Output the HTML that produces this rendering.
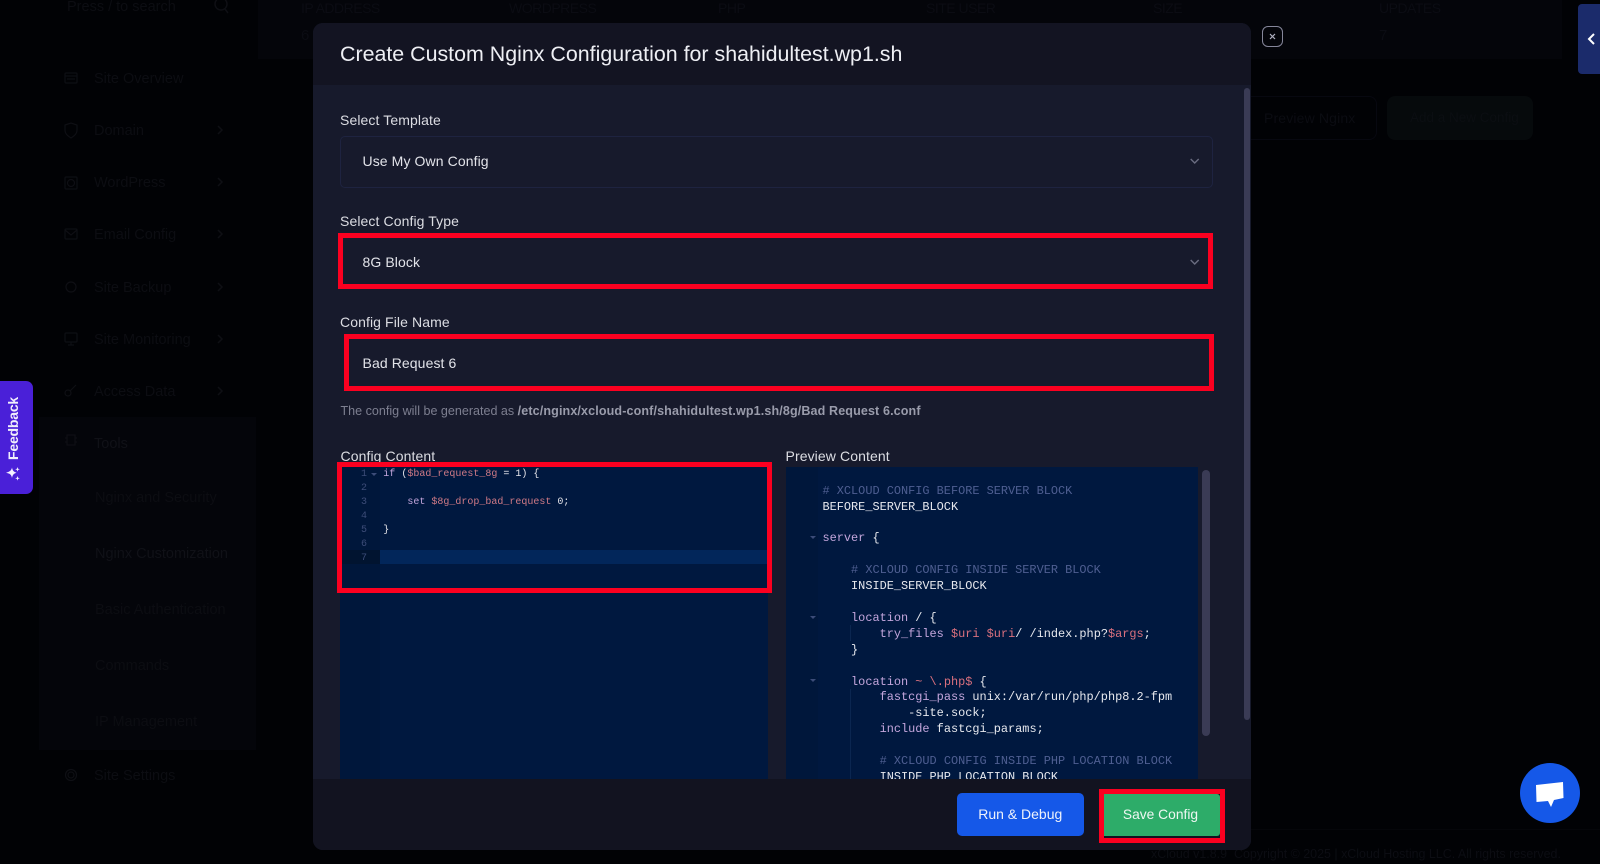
<!DOCTYPE html>
<html lang="en">
<head>
<meta charset="utf-8">
<title>Create Custom Nginx Configuration</title>
<style>
html,body{margin:0;padding:0;width:1600px;height:862px;overflow:hidden;background:#010205;font-family:"Liberation Sans",sans-serif}
.a{position:absolute}
.t{position:absolute;white-space:nowrap;line-height:20px;height:20px}
.dim{color:#0c0d12;font-size:14.5px}
.hd{color:#0b0c13;font-size:14px;letter-spacing:-.5px}
.sub{color:#0c0d12;font-size:14.5px}
.lab{color:#dcdde3;font-size:14px;letter-spacing:.1px}
.val{color:#e2e3e9;font-size:14px;letter-spacing:.1px}
.red{position:absolute;border:5px solid #fb0020;box-sizing:border-box}
.m{position:absolute;font-family:"Liberation Mono",monospace;white-space:pre}
.l1{font-size:10px;line-height:14px;color:#e4e4ea}
.l2{font-size:11.9px;line-height:15.9px;color:#e6e8ee}
.c{color:#4f5f92}.k{color:#c3a6dc}.v{color:#d9707e}.r{color:#cf7a86}
.n{position:absolute;left:340px;width:27px;text-align:right;font:10px/14px "Liberation Mono",monospace;color:#3c4c78}
.g{position:absolute;width:1px;background:#0b2650}
svg{position:absolute;overflow:visible}
</style>
</head>
<body>

<!-- dimmed background: sidebar -->
<div class="t dim" style="left:67px;top:-3px">Press / to search</div>
<svg style="left:213px;top:0" width="17" height="14" fill="none" stroke="#0e0f14" stroke-width="1.5"><circle cx="8" cy="4" r="6"/><path d="M12 9l3 4"/></svg>

<div class="a" style="left:39px;top:417px;width:217px;height:333px;background:#04050a"></div>

<div class="t dim" style="left:94px;top:69px">Site Overview</div>
<div class="t dim" style="left:94px;top:121px">Domain</div>
<div class="t dim" style="left:94px;top:173px">WordPress</div>
<div class="t dim" style="left:94px;top:225px">Email Config</div>
<div class="t dim" style="left:94px;top:278px">Site Backup</div>
<div class="t dim" style="left:94px;top:330px">Site Monitoring</div>
<div class="t dim" style="left:94px;top:382px">Access Data</div>
<div class="t dim" style="left:94px;top:434px;color:#101117">Tools</div>
<div class="t sub" style="left:95px;top:488px">Nginx and Security</div>
<div class="t sub" style="left:95px;top:544px;color:#101117">Nginx Customization</div>
<div class="t sub" style="left:95px;top:600px">Basic Authentication</div>
<div class="t sub" style="left:95px;top:656px">Commands</div>
<div class="t sub" style="left:95px;top:712px">IP Management</div>
<div class="t dim" style="left:94px;top:766px">Site Settings</div>

<svg style="left:64px;top:70px" width="14" height="720" fill="none" stroke="#0e0f14" stroke-width="1.2">
  <rect x="1" y="3" width="12" height="10" rx="1"/><path d="M1 6h12M3 9h8"/>
  <path d="M1 55l6-2 6 2v5c0 4-3 6-6 8-3-2-6-4-6-8z"/>
  <rect x="1" y="107" width="12" height="12" rx="1"/><circle cx="7" cy="113" r="3.5"/>
  <rect x="1" y="159" width="12" height="10" rx="1"/><path d="M1 160l6 5 6-5"/>
  <circle cx="7" cy="217" r="5"/>
  <rect x="1" y="263" width="12" height="9" rx="1"/><path d="M7 272v3M4 275h6"/>
  <circle cx="4" cy="323" r="3"/><path d="M6 321l6-6"/>
  <path d="M3 365h8v10H3zM1 368h2M11 368h2M1 372h2M11 372h2"/>
  <circle cx="7" cy="705" r="3"/><circle cx="7" cy="705" r="5.5"/>
</svg>
<svg style="left:217px;top:71px" width="8" height="330" fill="none" stroke="#0e0f14" stroke-width="1.5">
  <path d="M1 55l4 4-4 4M1 107l4 4-4 4M1 159l4 4-4 4M1 212l4 4-4 4M1 264l4 4-4 4M1 316l4 4-4 4"/>
</svg>

<!-- dimmed background: table -->
<div class="a" style="left:258px;top:-10px;width:1304px;height:69px;background:#04050a"></div>
<div class="t hd" style="left:301px;top:-2px">IP ADDRESS</div>
<div class="t hd" style="left:509px;top:-2px">WORDPRESS</div>
<div class="t hd" style="left:718px;top:-2px">PHP</div>
<div class="t hd" style="left:926px;top:-2px">SITE USER</div>
<div class="t hd" style="left:1153px;top:-2px">SIZE</div>
<div class="t hd" style="left:1379px;top:-2px">UPDATES</div>
<div class="t hd" style="left:301px;top:26px;font-size:15px">6</div>
<div class="t hd" style="left:1379px;top:26px;font-size:15px">7</div>

<div class="a" style="left:1240px;top:96px;width:137px;height:44px;box-sizing:border-box;border:1px solid #070810;border-radius:8px"></div>
<div class="t" style="left:1264px;top:108px;color:#0b0c12;font-size:14px;letter-spacing:.15px">Preview Nginx</div>
<div class="a" style="left:1387px;top:96px;width:146px;height:44px;background:#060a0c;border-radius:8px"></div>
<div class="t" style="left:1410px;top:108px;color:#0b0e12;font-size:13.5px">Add a New Config</div>

<div class="a" style="left:1578px;top:4px;width:22px;height:70px;background:#1b2b6b;border-radius:4px 0 0 4px"></div>
<svg style="left:1587px;top:32px" width="9" height="14" fill="none" stroke="#fff" stroke-width="2"><path d="M7 2L2 7l5 5"/></svg>

<div class="t" style="left:1151px;top:844px;color:#0c0d13;font-size:12.45px">xCloud v1.8.9&nbsp; Copyright © 2025 | xCloud Hosting LLC. All rights reserved.</div>
<div class="a" style="left:1251px;top:829px;width:349px;height:1px;background:#05060a"></div>

<!-- feedback tab -->
<div class="a" style="left:0;top:381px;width:33px;height:113px;background:#4a20d8;border-radius:0 7px 7px 0"></div>
<div class="t" style="left:-18px;top:419px;width:62px;color:#f0eefc;font-size:14px;font-weight:bold;transform:rotate(-90deg);text-align:center;letter-spacing:-.2px">Feedback</div>
<svg style="left:5px;top:466px" width="16" height="16" fill="#f4f2ff">
  <path d="M7 1.5c.6 3.2 1.7 4.4 4.6 5.2C8.7 7.5 7.600 8.800 7 12 6.400 8.800 5.300 7.500 1 6.700 4.300 5.900 6.400 4.700 7 1.500z"/>
  <path d="M12.5 1l.6 1.700 1.700.6-1.700.6-.6 1.700-.6-1.700-1.700-.6 1.700-.6zM12.500 10l.6 1.700 1.700.6-1.700.6-.6 1.700-.6-1.700-1.700-.6 1.700-.6z"/>
</svg>

<!-- chat bubble -->
<div class="a" style="left:1520px;top:763px;width:60px;height:60px;border-radius:50%;background:#1558e8"></div>
<svg style="left:1535px;top:781px" width="30" height="26" fill="#fff"><path d="M1 4L28 1l.5 16-9.5 2-3 7-3-6-11.5 1z"/></svg>

<!-- close button -->
<div class="a" style="left:1262px;top:26px;width:21px;height:21px;box-sizing:border-box;border:1.5px solid #85869a;border-radius:6px"></div>
<svg style="left:1269px;top:33px" width="7" height="7" fill="none" stroke="#b0b1c2" stroke-width="1.2"><path d="M1 1l5 5M6 1L1 6"/></svg>

<!-- modal -->
<div class="a" style="left:313px;top:23px;width:938px;height:827px;background:#171a2c;border-radius:10px;overflow:hidden">
  <div class="a" style="left:0;top:0;width:938px;height:62px;background:#131422"></div>
  <div class="a" style="left:0;top:756px;width:938px;height:71px;background:#121320"></div>
  <div class="a" style="left:931px;top:65px;width:6px;height:632px;background:#3a3b55;border-radius:3px"></div>
</div>

<div class="t" style="left:340px;top:41px;height:26px;line-height:26px;color:#eeeff4;font-size:21.4px">Create Custom Nginx Configuration for shahidultest.wp1.sh</div>

<div class="t lab" style="left:340px;top:110px">Select Template</div>
<div class="a" style="left:340px;top:136px;width:873px;height:52px;box-sizing:border-box;border:1px solid #1e2340;border-radius:5px"></div>
<div class="t val" style="left:362.5px;top:151px">Use My Own Config</div>
<svg style="left:1190px;top:158px" width="10" height="7" fill="none" stroke="#6a6c80" stroke-width="1.4"><path d="M.7 1l4 4 4-4"/></svg>

<div class="t lab" style="left:340px;top:211px">Select Config Type</div>
<div class="red" style="left:338px;top:233px;width:875px;height:56px"></div>
<div class="t val" style="left:362.5px;top:252px">8G Block</div>
<svg style="left:1190px;top:259px" width="10" height="7" fill="none" stroke="#6a6c80" stroke-width="1.4"><path d="M.7 1l4 4 4-4"/></svg>

<div class="t lab" style="left:340px;top:312px">Config File Name</div>
<div class="red" style="left:344px;top:334px;width:870px;height:57px"></div>
<div class="t val" style="left:362.5px;top:353px">Bad Request 6</div>

<div class="t" style="left:340.5px;top:401px;color:#7d7f90;font-size:12.55px">The config will be generated as <b style="color:#9a9cab;letter-spacing:.12px">/etc/nginx/xcloud-conf/shahidultest.wp1.sh/8g/Bad Request 6.conf</b></div>

<div class="t lab" style="left:340.5px;top:446px">Config Content</div>
<div class="t lab" style="left:785.5px;top:446px">Preview Content</div>

<!-- left editor -->
<div class="a" style="left:340px;top:467px;width:428px;height:312px;background:#00183f"></div>
<div class="a" style="left:340px;top:467px;width:40px;height:312px;background:#00173b"></div>
<div class="a" style="left:380px;top:550px;width:388px;height:14px;background:#02265a"></div>
<div class="a" style="left:340px;top:550px;width:40px;height:14px;background:#011430"></div>
<div class="n" style="top:468px">1</div>
<div class="n" style="top:482px">2</div>
<div class="n" style="top:496px">3</div>
<div class="n" style="top:510px">4</div>
<div class="n" style="top:524px">5</div>
<div class="n" style="top:538px">6</div>
<div class="n" style="top:552px">7</div>
<svg style="left:371px;top:473px" width="6" height="4" fill="#3c4c78"><path d="M0 0h6L3 3z"/></svg>
<div class="m l1" style="left:383.3px;top:468px"><span class="k">if</span> (<span class="r">$bad_request_8g</span> = 1) {

    <span class="k">set</span> <span class="r">$8g_drop_bad_request</span> 0;

}</div>
<div class="red" style="left:337px;top:462px;width:435px;height:131px"></div>

<!-- right editor -->
<div class="a" style="left:786px;top:467px;width:412px;height:312px;background:#00183f;overflow:hidden">
  <div class="a" style="left:0;top:0;width:32px;height:312px;background:#00173b"></div>
  <div class="g" style="left:64px;top:158px;height:16px"></div>
  <div class="g" style="left:64px;top:222px;height:64px"></div>
  <div class="g" style="left:64px;top:286px;height:26px"></div>
  <div class="m l2" style="left:36.5px;top:16.7px"><span class="c"># XCLOUD CONFIG BEFORE SERVER BLOCK</span>
BEFORE_SERVER_BLOCK

<span class="k">server</span> {

    <span class="c"># XCLOUD CONFIG INSIDE SERVER BLOCK</span>
    INSIDE_SERVER_BLOCK

    <span class="k">location</span> / {
        <span class="k">try_files</span> <span class="v">$uri</span> <span class="v">$uri</span>/ /index.php?<span class="v">$args</span>;
    }

    <span class="k">location</span> <span class="v">~ \.php$</span> {
        <span class="k">fastcgi_pass</span> unix:/var/run/php/php8.2-fpm
            -site.sock;
        <span class="k">include</span> fastcgi_params;

        <span class="c"># XCLOUD CONFIG INSIDE PHP LOCATION BLOCK</span>
        INSIDE_PHP_LOCATION_BLOCK</div>
  <svg style="left:24px;top:69px" width="6" height="4" fill="#3c4c78"><path d="M0 0h6L3 3z"/></svg>
  <svg style="left:24px;top:149px" width="6" height="4" fill="#3c4c78"><path d="M0 0h6L3 3z"/></svg>
  <svg style="left:24px;top:212px" width="6" height="4" fill="#3c4c78"><path d="M0 0h6L3 3z"/></svg>
</div>
<div class="a" style="left:1202px;top:470px;width:8px;height:266px;background:#3a3b55;border-radius:4px"></div>

<!-- footer buttons -->
<div class="a" style="left:956.5px;top:793px;width:127.5px;height:43px;background:#1558e8;border-radius:5px"></div>
<div class="t" style="left:956.5px;top:804px;width:127.5px;text-align:center;color:#eef2fb;font-size:14px">Run &amp; Debug</div>
<div class="a" style="left:1099px;top:789px;width:126px;height:54px;background:#121320;box-sizing:border-box;border:5px solid #fb0020"></div>
<div class="a" style="left:1104px;top:794px;width:116px;height:42px;background:#2dac69;border-radius:0 3px 3px 0"></div>
<div class="t" style="left:1102.5px;top:805px;width:116px;text-align:center;color:#eef7f2;font-size:13.8px">Save Config</div>

</body>
</html>
